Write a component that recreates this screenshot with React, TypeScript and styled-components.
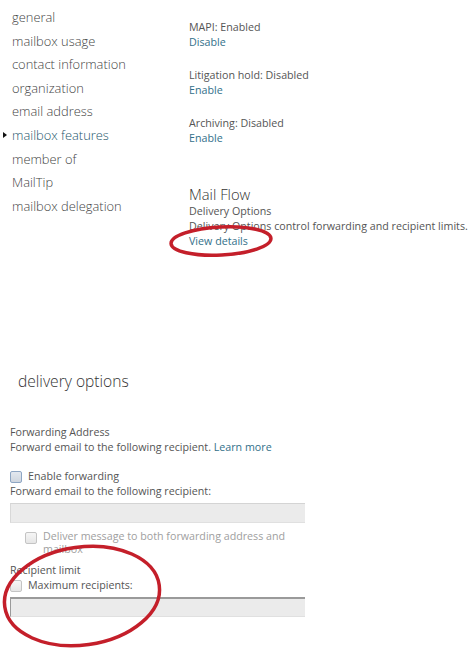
import React from 'react'
import styled, { createGlobalStyle } from 'styled-components'

const GlobalStyle = createGlobalStyle`
  html, body {
    margin: 0;
    padding: 0;
    background: #ffffff;
  }
  body {
    font-family: "Open Sans", "Noto Sans", sans-serif;
    color: #444444;
  }
`

const navItems = [
  'general',
  'mailbox usage',
  'contact information',
  'organization',
  'email address',
  'mailbox features',
  'member of',
  'MailTip',
  'mailbox delegation',
]

const features = [
  { label: 'MAPI: Enabled', action: 'Disable' },
  { label: 'Litigation hold: Disabled', action: 'Enable' },
  { label: 'Archiving: Disabled', action: 'Enable' },
]

const Page = styled.div`
  position: relative;
  width: 474px;
  height: 664px;
  overflow: hidden;
`

const Top = styled.div`
  display: flex;
`

const Nav = styled.ul`
  list-style: none;
  margin: 0;
  padding: 6px 0 0 12px;
  width: 189px;
  box-sizing: border-box;
`

const NavItem = styled.li<{ active?: boolean }>`
  position: relative;
  font-size: 12.9px;
  font-weight: 300;
  line-height: 23.6px;
  height: 23.6px;
  white-space: nowrap;
  color: ${({ active }) => (active ? '#24566b' : '#444444')};
  &::before {
    content: '';
    display: ${({ active }) => (active ? 'block' : 'none')};
    position: absolute;
    left: -9px;
    top: 8px;
    border-left: 4px solid #111;
    border-top: 3.5px solid transparent;
    border-bottom: 3.5px solid transparent;
  }
`

const Details = styled.div`
  display: flex;
  flex-direction: column;
  padding-top: 20px;
`

const Feature = styled.div`
  display: flex;
  flex-direction: column;
  margin-bottom: 18px;
`

const Line = styled.span<{ muted?: boolean }>`
  font-size: 10.7px;
  line-height: ${({ muted }) => (muted ? 13 : 15)}px;
  white-space: nowrap;
  color: ${({ muted }) => (muted ? '#a0a0a0' : '#555555')};
`

const Link = styled.a`
  font-size: 10.7px;
  line-height: 15px;
  color: #33708a;
  text-decoration: none;
  white-space: nowrap;
`

const SectionTitle = styled.div`
  font-size: 14.8px;
  font-weight: 300;
  line-height: 18px;
  color: #333333;
  margin-top: 21px;
  margin-bottom: 1px;
`

const Dialog = styled.div`
  display: flex;
  flex-direction: column;
  padding: 121px 0 0 10px;
`

const DialogTitle = styled.h2`
  margin: 0 0 33px 8px;
  font-size: 15.6px;
  font-weight: 300;
  line-height: 22px;
  color: #333333;
`

const Block = styled.div<{ gap?: number }>`
  display: flex;
  flex-direction: column;
  margin-bottom: ${({ gap }) => gap ?? 0}px;
`

const CheckRow = styled.label<{ indent?: number }>`
  display: flex;
  align-items: flex-start;
  gap: 6px;
  padding-left: ${({ indent }) => indent ?? 0}px;
`

const Box = styled.span<{ focused?: boolean }>`
  flex: none;
  width: 10px;
  height: 10px;
  margin-top: 2px;
  border-radius: 2px;
  border: 1px solid ${({ focused }) => (focused ? '#8ea6c4' : '#c4c4c4')};
  background: ${({ focused }) =>
    focused ? 'linear-gradient(#e3e8ef, #cfd6df)' : 'linear-gradient(#f6f6f6, #e6e6e6)'};
`

const Input = styled.div<{ dark?: boolean }>`
  width: 295px;
  height: 20px;
  box-sizing: border-box;
  background: #ebebeb;
  border: 1px solid #e0e0e0;
  border-top: ${({ dark }) => (dark ? '2px solid #9a9a9a' : '1px solid #d4d4d4')};
  border-left: ${({ dark }) => (dark ? '1px solid #9a9a9a' : '1px solid #d8d8d8')};
  border-right: none;
  margin: 4px 0 7px;
`

const Marks = styled.svg`
  position: absolute;
  left: 0;
  top: 0;
  pointer-events: none;
`

const App: React.FC = () => {
  return (
    <Page>
      <GlobalStyle />
      <Top>
        <Nav>
          {navItems.map((item) => (
            <NavItem key={item} active={item === 'mailbox features'}>
              {item}
            </NavItem>
          ))}
        </Nav>
        <Details>
          {features.map((f) => (
            <Feature key={f.label}>
              <Line>{f.label}</Line>
              <Link>{f.action}</Link>
            </Feature>
          ))}
          <SectionTitle>Mail Flow</SectionTitle>
          <Line>Delivery Options</Line>
          <Line>Delivery Options control forwarding and recipient limits.</Line>
          <Link>View details</Link>
        </Details>
      </Top>

      <Dialog>
        <DialogTitle>delivery options</DialogTitle>
        <Block gap={14}>
          <Line>Forwarding Address</Line>
          <Line>
            Forward email to the following recipient. <Link>Learn more</Link>
          </Line>
        </Block>
        <Block gap={7}>
          <CheckRow>
            <Box focused />
            <Line>Enable forwarding</Line>
          </CheckRow>
          <Line>Forward email to the following recipient:</Line>
          <Input />
          <CheckRow indent={15}>
            <Box />
            <Line muted>
              Deliver message to both forwarding address and
              <br />
              mailbox
            </Line>
          </CheckRow>
        </Block>
        <Block>
          <Line>Recipient limit</Line>
          <CheckRow>
            <Box />
            <Line>Maximum recipients:</Line>
          </CheckRow>
          <Input dark />
        </Block>
      </Dialog>

      <Marks width="474" height="664" viewBox="0 0 474 664">
        <ellipse cx="221" cy="241" rx="50" ry="14" transform="rotate(-3 221 241)"
          fill="none" stroke="#c41f2a" strokeWidth="3.5" />
        <ellipse cx="82" cy="596" rx="78" ry="49" transform="rotate(-8 82 596)"
          fill="none" stroke="#c41f2a" strokeWidth="3.5" />
      </Marks>
    </Page>
  )
}

export default App
